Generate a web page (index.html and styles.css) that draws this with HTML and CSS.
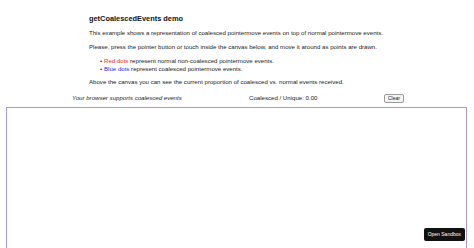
FILE: index.html
```html
<!DOCTYPE html>
<html>
<head>
<meta charset="utf-8">
<link rel="stylesheet" href="styles.css">
</head>
<body>
<div class="content">
  <h1 class="title">getCoalescedEvents demo</h1>
  <p class="para">This example shows a representation of coalesced pointermove events on top of normal pointermove events.</p>
  <p class="para">Please, press the pointer button or touch inside the canvas below, and move it around as points are drawn.</p>
  <ul class="list">
    <li class="item"><span class="red">Red dots</span> represent normal non-coalesced pointermove events.</li>
    <li class="item"><span class="blue">Blue dots</span> represent coalesced pointermove events.</li>
  </ul>
  <p class="para">Above the canvas you can see the current proportion of coalesced vs. normal events received.</p>
</div>
<div class="status">
  <span class="support">Your browser supports coalesced events</span>
  <span class="ratio">Coalesced / Unique: 0.00</span>
  <button class="clear">Clear</button>
</div>
<div class="canvas"></div>
<a class="sandbox">Open Sandbox</a>
</body>
</html>
```

FILE: styles.css
```css
html, body {
  margin: 0;
  padding: 0;
  background: #fff;
  overflow: hidden;
}
body {
  font-family: "Liberation Sans", Arial, sans-serif;
  font-size: 6.1px;
  line-height: 8px;
  color: #222;
  height: 248px;
  display: flex;
  flex-direction: column;
}
.content {
  width: 300px;
  margin: 0 0 0 89px;
  padding-top: 14px;
}
.title {
  font-size: 7.4px;
  line-height: 9px;
  font-weight: bold;
  margin: 0 0 6px 0;
  color: #111;
}
.para {
  margin: 0 0 6px 0;
}
.list {
  margin: 0 0 5px 0;
  padding-left: 16px;
  list-style: none;
}
.item::before {
  content: "\2022";
  display: inline-block;
  width: 4px;
  margin-left: -5px;
  color: #222;
}
.red { color: #e8262b; }
.blue { color: #2b2bdc; }
.status {
  display: flex;
  align-items: center;
  height: 10px;
  margin-top: 1px;
  padding-left: 72px;
}
.support {
  font-style: italic;
  width: 177px;
}
.ratio {
  width: 135px;
}
.clear {
  font-family: "Liberation Sans", Arial, sans-serif;
  font-size: 5px;
  line-height: 6px;
  height: 9px;
  padding: 0 3px;
  background: #f3f3f3;
  border: 1px solid #9a9a9a;
  border-radius: 2px;
  color: #222;
}
.canvas {
  flex: 1;
  margin: 4px 0 0 6px;
  width: 459px;
  border: 1px solid #a497e6;
  border-bottom: none;
}
.sandbox {
  position: fixed;
  right: 9px;
  bottom: 7px;
  background: #111;
  color: #fff;
  font-size: 5px;
  line-height: 13px;
  padding: 0 4px;
  border-radius: 2px;
}
```
